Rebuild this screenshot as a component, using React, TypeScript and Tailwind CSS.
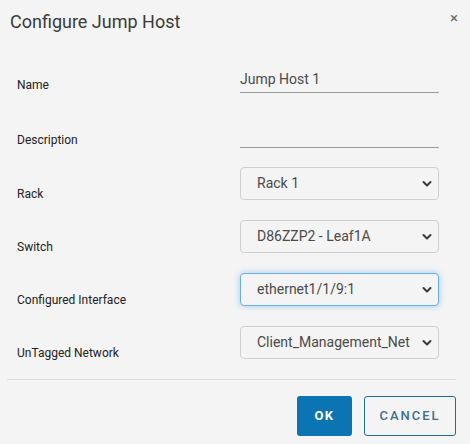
import React from "react";

const Chevron = () => (
  <svg
    className="pointer-events-none absolute right-[7px] top-1/2 -translate-y-1/2"
    width="10"
    height="7"
    viewBox="0 0 10 7"
    fill="none"
  >
    <polyline points="1.5,1.5 5,5 8.5,1.5" stroke="#3a3a3a" strokeWidth="2" strokeLinecap="round" strokeLinejoin="round" />
  </svg>
);

function Select({ value, focused }: { value: string; focused?: boolean }) {
  return (
    <div className="relative h-[33px] w-[199px]">
      <select
        defaultValue={value}
        className={
          "h-full w-full appearance-none rounded-[4px] border bg-[#f4f4f4] pl-[16px] pr-[24px] text-[14px] text-[#4a4a4a] outline-none " +
          (focused
            ? "border-[#66afe9] shadow-[0_0_6px_rgba(102,175,233,0.6)]"
            : "border-[#cfcfcf]")
        }
      >
        <option>{value}</option>
      </select>
      <Chevron />
    </div>
  );
}

function Row({ label, children, h }: { label: string; children: React.ReactNode; h: string }) {
  return (
    <div className={"flex " + h}>
      <div className="w-[223px] pt-[19px] text-[12px] leading-[16px] text-[#222]">{label}</div>
      <div>{children}</div>
    </div>
  );
}

export default function App() {
  return (
    <div
      className="h-[444px] w-[470px] bg-[#f4f4f4]"
      style={{ fontFamily: "Roboto, 'Liberation Sans', sans-serif" }}
    >
      <div className="flex items-start justify-between pl-[10px] pr-[12px] pt-[10px]">
        <div className="text-[18px] leading-[24px] text-[#3a3a3a]">Configure Jump Host</div>
        <div className="pt-[1px] text-[15px] leading-[15px] text-[#666]">×</div>
      </div>
      <div className="mt-[24px] pl-[17px]">
        <Row label="Name" h="h-[55px]">
          <input
            defaultValue="Jump Host 1"
            className="block h-[35px] w-[199px] border-b border-[#9a9a9a] bg-transparent pb-[5px] pt-[13px] text-[14px] leading-[16px] text-[#4a4a4a] outline-none"
          />
        </Row>
        <Row label="Description" h="h-[54px]">
          <input
            defaultValue=""
            className="block h-[35px] w-[199px] border-b border-[#9a9a9a] bg-transparent pb-[5px] pt-[13px] text-[14px] leading-[16px] text-[#4a4a4a] outline-none"
          />
        </Row>
        <Row label="Rack" h="h-[53px]">
          <Select value="Rack 1" />
        </Row>
        <Row label="Switch" h="h-[53px]">
          <Select value="D86ZZP2 - Leaf1A" />
        </Row>
        <Row label="Configured Interface" h="h-[53px]">
          <Select value="ethernet1/1/9:1" focused />
        </Row>
        <Row label="UnTagged Network" h="h-[53px]">
          <Select value="Client_Management_Net" />
        </Row>
      </div>
      <div className="ml-[7px] mr-[14px] border-t border-[#dcdcdc] pt-[16px]">
        <div className="flex justify-end gap-[12px]">
          <button className="h-[40px] w-[55px] rounded-[3px] bg-[#0b75b3] text-[13px] font-bold tracking-[1.5px] text-white">
            OK
          </button>
          <button className="h-[40px] w-[92px] rounded-[3px] border border-[#1e6c9c] bg-[#f4f4f4] text-[13px] font-medium tracking-[2px] text-[#3d6e8e]">
            CANCEL
          </button>
        </div>
      </div>
    </div>
  );
}
